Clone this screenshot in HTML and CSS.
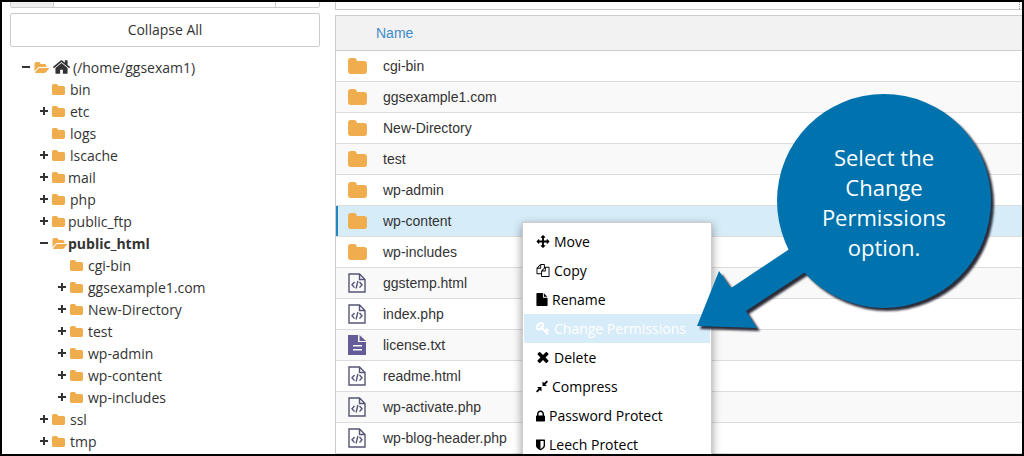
FILE: index.html
```
<!DOCTYPE html>
<html lang="en">
<head>
    <meta charset="UTF-8">
    <title>File Manager</title>
    <meta name="viewport" content="width=device-width, initial-scale=1.0">
    <link rel="stylesheet" href="styles.css">
</head>
<body>
    <svg class="sprite" aria-hidden="true">
        <symbol id="folder" viewBox="64 128 1664 1408"><path d="M1728 608v704q0 92-66 158t-158 66h-1216q-92 0-158-66t-66-158v-960q0-92 66-158t158-66h320q92 0 158 66t66 158v32h672q92 0 158 66t66 158z"/></symbol>
        <symbol id="folder-open" viewBox="0 128 1944 1408"><path d="M1943 952q0 31-31 66l-336 396q-43 51-120.500 86.500t-143.500 35.500h-1088q-34 0-60.500-13t-26.500-43q0-31 31-66l336-396q43-51 120.500-86.500t143.500-35.500h1088q34 0 60.500 13t26.500 43zm-343-344v160h-832q-94 0-197 47.500t-164 119.500l-337 396-5 6q0-4-.5-12.500t-.5-12.500v-960q0-92 66-158t158-66h320q92 0 158 66t66 158v32h544q92 0 158 66t66 158z"/></symbol>
        <symbol id="home" viewBox="89 253 1614 1283"><path d="M1472 992v480q0 26-19 45t-45 19h-384v-384h-256v384h-384q-26 0-45-19t-19-45v-480q0-1 .5-3t.5-3l575-474 575 474q1 2 1 6zm223-69l-62 74q-8 9-21 11h-3q-13 0-21-7l-692-577-692 577q-12 8-24 7-13-2-21-11l-62-74q-8-10-7-23.500t11-21.500l719-599q32-26 76-26t76 26l244 204v-195q0-14 9-23t23-9h192q14 0 23 9t9 23v408l219 182q10 8 11 21.500t-7 23.500z"/></symbol>
        <symbol id="plus" viewBox="0 0 8 8"><path d="M3 0h2v3h3v2H5v3H3V5H0V3h3z"/></symbol>
        <symbol id="minus" viewBox="0 0 8 8"><path d="M0 3h8v2H0z"/></symbol>
        <symbol id="code-file" viewBox="0 0 18 20"><path fill="none" stroke="currentColor" stroke-width="1.400" d="M1 1h10.500L17 6.500V19H1zM11.500 1v5.500H17M6.500 9L4 11.800l2.500 2.800M11.500 9l2.500 2.800-2.500 2.800M9.900 8l-1.800 7.500"/></symbol>
        <symbol id="text-file" viewBox="0 0 18 20"><path d="M0 0h10v7h8v13H0zM11.500 0L18 6h-6.500zM5 10v1.500h9V10zM5 14v1.500h9V14z" fill-rule="evenodd"/></symbol>
        <symbol id="move" viewBox="0 0 1792 1792"><path d="M1792 896q0 26-19 45l-256 256q-19 19-45 19t-45-19-19-45v-128h-384v384h128q26 0 45 19t19 45-19 45l-256 256q-19 19-45 19t-45-19l-256-256q-19-19-19-45t19-45 45-19h128v-384h-384v128q0 26-19 45t-45 19-45-19l-256-256q-19-19-19-45t19-45l256-256q19-19 45-19t45 19 19 45v128h384v-384h-128q-26 0-45-19t-19-45 19-45l256-256q19-19 45-19t45 19l256 256q19 19 19 45t-19 45-45 19h-128v384h384v-128q0-26 19-45t45-19 45 19l256 256q19 19 19 45z"/></symbol>
        <symbol id="copy" viewBox="0 0 1792 1792"><path d="M1696 384q40 0 68 28t28 68v1216q0 40-28 68t-68 28h-960q-40 0-68-28t-28-68v-288h-544q-40 0-68-28t-28-68v-672q0-40 20-88t48-76l408-408q28-28 76-48t88-20h416q40 0 68 28t28 68v328q68-40 128-40h416zm-544 213l-299 299h299v-299zm-640-384l-299 299h299v-299zm196 647l316-316v-416h-384v416q0 40-28 68t-68 28h-416v640h512v-256q0-40 20-88t48-76zm956 804v-1152h-384v416q0 40-28 68t-68 28h-416v640h896z"/></symbol>
        <symbol id="file" viewBox="128 0 1536 1792"><path d="M1152 512v-472q22 14 36 28l408 408q14 14 28 36h-472zm-128 32q0 40 28 68t68 28h544v1056q0 40-28 68t-68 28h-1344q-40 0-68-28t-28-68v-1600q0-40 28-68t68-28h800v544z"/></symbol>
        <symbol id="key" viewBox="64 100 1664 1664"><path stroke="currentColor" stroke-width="60" d="M832 512q0-80-56-136t-136-56-136 56-56 136q0 42 19 83-41-19-83-19-80 0-136 56t-56 136 56 136 136 56 136-56 56-136q0-42-19-83 41 19 83 19 80 0 136-56t56-136zm851 704q0 17-49 66t-66 49q-9 0-28.500-16t-36.500-33-38.500-40-24.500-26l-96 96 220 220q28 28 28 68 0 42-39 81t-81 39q-40 0-68-28l-671-671q-176 131-365 131-163 0-265.500-102.500t-102.500-265.500q0-160 95-313t248-248 313-95q163 0 265.500 102.500t102.500 265.500q0 189-131 365l355 355 96-96q-3-3-26-24.500t-40-38.500-33-36.500-16-28.500q0-17 49-66t66-49q13 0 23 10 6 6 46 44.500t82 79.500 86.500 86 73 78 28.500 41z"/></symbol>
        <symbol id="times" viewBox="302 366 1188 1188"><path d="M1490 1322q0 40-28 68l-136 136q-28 28-68 28t-68-28l-294-294-294 294q-28 28-68 28t-68-28l-136-136q-28-28-28-68t28-68l294-294-294-294q-28-28-28-68t28-68l136-136q28-28 68-28t68 28l294 294 294-294q28-28 68-28t68 28l136 136q28 28 28 68t-28 68l-294 294 294 294q28 28 28 68z"/></symbol>
        <symbol id="compress" viewBox="0 0 12 12"><path d="M6.500 5.500V1l1.600 1.600L10.700 0 12 1.300 9.400 3.900 11 5.500zM5.500 6.500V11L3.900 9.400 1.300 12 0 10.700l2.600-2.600L1 6.500z"/></symbol>
        <symbol id="lock" viewBox="320 128 1152 1408"><path d="M640 768h512v-192q0-106-75-181t-181-75-181 75-75 181v192zm832 96v576q0 40-28 68t-68 28h-960q-40 0-68-28t-28-68v-576q0-40 28-68t68-28h32v-192q0-184 132-316t316-132 316 132 132 316v192h32q40 0 68 28t28 68z"/></symbol>
        <symbol id="shield" viewBox="256 128 1280 1536"><path d="M1344 960v-640h-448v1137q119-63 213-137 235-184 235-360zm192-768v768q0 86-33.500 170.500t-83 150-118 127.500-126.500 103-121 77.500-89.500 49.500-42.500 20q-12 6-26 6t-26-6q-16-7-42.500-20t-89.500-49.500-121-77.500-126.500-103-118-127.500-83-150-33.500-170.500v-768q0-26 19-45t45-19h1152q26 0 45 19t19 45z"/></symbol>
    </svg>

    <div class="window">
        <aside class="sidebar">
            <div class="path-bar">
                <button class="path-home" aria-label="Home"></button>
                <input class="path-input" type="text" aria-label="Path">
                <button class="path-go" aria-label="Go"></button>
            </div>
            <button class="collapse-button">Collapse All</button>

            <ul class="tree">
                <li>
                    <div class="node root"><svg class="toggle"><use href="#minus"/></svg><svg class="node-icon open"><use href="#folder-open"/></svg><svg class="home-icon"><use href="#home"/></svg><a href="#">(/home/ggsexam1)</a></div>
                    <ul>
                        <li><div class="node"><span class="toggle"></span><svg class="node-icon"><use href="#folder"/></svg><a href="#">bin</a></div></li>
                        <li><div class="node"><svg class="toggle"><use href="#plus"/></svg><svg class="node-icon"><use href="#folder"/></svg><a href="#">etc</a></div></li>
                        <li><div class="node"><span class="toggle"></span><svg class="node-icon"><use href="#folder"/></svg><a href="#">logs</a></div></li>
                        <li><div class="node"><svg class="toggle"><use href="#plus"/></svg><svg class="node-icon"><use href="#folder"/></svg><a href="#">lscache</a></div></li>
                        <li><div class="node special"><svg class="toggle"><use href="#plus"/></svg><svg class="node-icon"><use href="#folder"/></svg><a href="#">mail</a></div></li>
                        <li><div class="node"><svg class="toggle"><use href="#plus"/></svg><svg class="node-icon"><use href="#folder"/></svg><a href="#">php</a></div></li>
                        <li><div class="node special"><svg class="toggle"><use href="#plus"/></svg><svg class="node-icon"><use href="#folder"/></svg><a href="#">public_ftp</a></div></li>
                        <li>
                            <div class="node special current"><svg class="toggle"><use href="#minus"/></svg><svg class="node-icon open"><use href="#folder-open"/></svg><a href="#">public_html</a></div>
                            <ul>
                                <li><div class="node"><span class="toggle"></span><svg class="node-icon"><use href="#folder"/></svg><a href="#">cgi-bin</a></div></li>
                                <li><div class="node"><svg class="toggle"><use href="#plus"/></svg><svg class="node-icon"><use href="#folder"/></svg><a href="#">ggsexample1.com</a></div></li>
                                <li><div class="node"><svg class="toggle"><use href="#plus"/></svg><svg class="node-icon"><use href="#folder"/></svg><a href="#">New-Directory</a></div></li>
                                <li><div class="node"><svg class="toggle"><use href="#plus"/></svg><svg class="node-icon"><use href="#folder"/></svg><a href="#">test</a></div></li>
                                <li><div class="node"><svg class="toggle"><use href="#plus"/></svg><svg class="node-icon"><use href="#folder"/></svg><a href="#">wp-admin</a></div></li>
                                <li><div class="node"><svg class="toggle"><use href="#plus"/></svg><svg class="node-icon"><use href="#folder"/></svg><a href="#">wp-content</a></div></li>
                                <li><div class="node"><svg class="toggle"><use href="#plus"/></svg><svg class="node-icon"><use href="#folder"/></svg><a href="#">wp-includes</a></div></li>
                            </ul>
                        </li>
                        <li><div class="node"><svg class="toggle"><use href="#plus"/></svg><svg class="node-icon"><use href="#folder"/></svg><a href="#">ssl</a></div></li>
                        <li><div class="node"><svg class="toggle"><use href="#plus"/></svg><svg class="node-icon"><use href="#folder"/></svg><a href="#">tmp</a></div></li>
                    </ul>
                </li>
            </ul>
        </aside>

        <main class="files">
            <div class="toolbar"><span class="toolbar-edge"></span></div>
            <table class="file-table">
                <thead>
                    <tr><th class="icon-cell"></th><th>Name</th></tr>
                </thead>
                <tbody>
                    <tr><td class="icon-cell"><svg class="folder-icon"><use href="#folder"/></svg></td><td>cgi-bin</td></tr>
                    <tr><td class="icon-cell"><svg class="folder-icon"><use href="#folder"/></svg></td><td>ggsexample1.com</td></tr>
                    <tr><td class="icon-cell"><svg class="folder-icon"><use href="#folder"/></svg></td><td>New-Directory</td></tr>
                    <tr><td class="icon-cell"><svg class="folder-icon"><use href="#folder"/></svg></td><td>test</td></tr>
                    <tr><td class="icon-cell"><svg class="folder-icon"><use href="#folder"/></svg></td><td>wp-admin</td></tr>
                    <tr class="selected"><td class="icon-cell"><svg class="folder-icon"><use href="#folder"/></svg></td><td>wp-content</td></tr>
                    <tr><td class="icon-cell"><svg class="folder-icon"><use href="#folder"/></svg></td><td>wp-includes</td></tr>
                    <tr><td class="icon-cell"><svg class="file-icon"><use href="#code-file"/></svg></td><td>ggstemp.html</td></tr>
                    <tr><td class="icon-cell"><svg class="file-icon"><use href="#code-file"/></svg></td><td>index.php</td></tr>
                    <tr><td class="icon-cell"><svg class="file-icon text"><use href="#text-file"/></svg></td><td>license.txt</td></tr>
                    <tr><td class="icon-cell"><svg class="file-icon"><use href="#code-file"/></svg></td><td>readme.html</td></tr>
                    <tr><td class="icon-cell"><svg class="file-icon"><use href="#code-file"/></svg></td><td>wp-activate.php</td></tr>
                    <tr><td class="icon-cell"><svg class="file-icon"><use href="#code-file"/></svg></td><td>wp-blog-header.php</td></tr>
                </tbody>
            </table>
        </main>

        <div class="context-menu">
            <button><svg class="menu-icon"><use href="#move"/></svg>Move</button>
            <button><svg class="menu-icon"><use href="#copy"/></svg>Copy</button>
            <button><svg class="menu-icon medium"><use href="#file"/></svg>Rename</button>
            <button class="active"><svg class="menu-icon"><use href="#key"/></svg>Change Permissions</button>
            <button><svg class="menu-icon cross"><use href="#times"/></svg>Delete</button>
            <button><svg class="menu-icon medium"><use href="#compress"/></svg>Compress</button>
            <button><svg class="menu-icon small"><use href="#lock"/></svg>Password Protect</button>
            <button><svg class="menu-icon small"><use href="#shield"/></svg>Leech Protect</button>
        </div>

        <div class="callout">
            <svg class="callout-shape" viewBox="0 0 296 237" aria-hidden="true">
                <circle cx="187" cy="108" r="107"/>
                <path d="M94 155L34 195 22 178 0 233 60 235 49 218 110 178z"/>
            </svg>
            <p class="callout-text">Select the Change Permissions option.</p>
        </div>
    </div>
</body>
</html>
```
FILE: styles.css
```
* {
    box-sizing: border-box;
}

body {
    margin: 0;
    background-color: #fff;
    color: #333;
    font-family: "Open Sans", "Noto Sans", sans-serif;
    font-size: 14px;
}

button {
    font-family: inherit;
    font-size: 14px;
    cursor: pointer;
}

svg {
    fill: currentColor;
    flex: none;
}

.sprite {
    display: none;
}

.window {
    position: relative;
    display: flex;
    gap: 15px;
    height: 100vh;
    padding-left: 8px;
    border: 2px solid #000;
    overflow: hidden;
}

/* Folder tree */
.sidebar {
    flex: none;
    width: 310px;
}

/* only the lower edge of the bar is scrolled into view */
.path-bar {
    display: flex;
    height: 34px;
    margin-top: -28px;
    border: 1px solid #ccc;
    border-radius: 2px;
}

.path-home,
.path-input,
.path-go {
    border: 0;
    padding: 0;
    background-color: #fff;
}

.path-home {
    width: 43px;
    background-color: #eee;
    border-right: 1px solid #ccc;
}

.path-input {
    flex: 1;
    min-width: 0;
}

.path-go {
    width: 44px;
    border-left: 1px solid #ccc;
}

.collapse-button {
    display: block;
    width: 100%;
    height: 34px;
    margin: 5px 0 9px;
    padding-bottom: 3px;
    border: 1px solid #ccc;
    border-radius: 2px;
    background-color: #fff;
    color: #333;
}

.tree,
.tree ul {
    margin: 0;
    padding: 0;
    list-style: none;
}

.tree {
    padding-left: 12px;
}

.tree ul {
    padding-left: 18px;
}

.node {
    display: flex;
    align-items: center;
    gap: 4px;
    height: 22px;
}

.node a {
    margin-left: 1px;
    color: #333;
    text-decoration: none;
}

.home-icon {
    width: 17px;
    height: 14px;
}

.toggle {
    width: 8px;
    height: 8px;
}

.node-icon {
    width: 13px;
    height: 11px;
    color: #f0ad4e;
}

.node-icon.open {
    width: 15px;
}

.node.root a,
.node.special a {
    margin-left: -1px;
}

.node.current {
    font-weight: bold;
}

.node.current a {
    margin-left: -3px;
}

/* File list */
.files {
    flex: 1;
    min-width: 0;
}

.toolbar {
    display: flex;
    justify-content: flex-end;
    height: 8px;
    margin-bottom: 5px;
    padding-right: 2px;
    border-left: 1px solid #ccc;
    border-bottom: 1px solid #ccc;
}

.toolbar-edge {
    border-left: 1px dotted #999;
}

.file-table {
    width: 100%;
    border-collapse: separate;
    border-spacing: 0;
    border-top: 1px solid #ccc;
    border-left: 1px solid #ccc;
    font-family: "Liberation Sans", Arial, sans-serif;
}

.file-table th,
.file-table td {
    padding: 0 0 0 7px;
    border-bottom: 1px solid #ddd;
    text-align: left;
}

.file-table td {
    height: 31px;
}

.file-table th {
    height: 35px;
    padding-left: 0;
    border-bottom-color: #ccc;
    background-color: #f2f2f2;
    color: #428bca;
    font-weight: normal;
}

.file-table .icon-cell {
    width: 40px;
    padding-left: 12px;
}

.file-table tbody tr:nth-child(even) {
    background-color: #f9f9f9;
}

.file-table tbody tr.selected {
    background-color: #d7ecf9;
}

.selected .icon-cell {
    box-shadow: inset 2px 0 #1f86c0;
}

.icon-cell svg {
    display: block;
}

.folder-icon {
    width: 19px;
    height: 16px;
    color: #f0ad4e;
}

.file-icon {
    width: 18px;
    height: 20px;
    color: #555577;
}

.file-icon.text {
    color: #635c99;
}

/* Right click menu */
.context-menu {
    position: absolute;
    top: 220px;
    left: 520px;
    width: 190px;
    padding: 4px 1px;
    border: 1px solid #ccc;
    background-color: #fff;
    box-shadow: 0 3px 9px rgba(0, 0, 0, 0.4);
}

.context-menu button {
    display: flex;
    align-items: center;
    gap: 4px;
    width: 100%;
    height: 29px;
    padding: 0 12px;
    border: 0;
    background-color: transparent;
    color: #000;
}

.context-menu button.active {
    background-color: #d7ecf9;
    color: #fff;
}

.menu-icon {
    width: 14px;
    height: 13px;
}

.menu-icon.cross {
    height: 11px;
}

.menu-icon.medium {
    width: 12px;
}

.menu-icon.small {
    width: 9px;
    height: 12px;
}

/* Tutorial callout */
.callout {
    position: absolute;
    top: 91px;
    left: 695px;
    width: 296px;
}

.callout-shape {
    display: block;
    width: 100%;
    fill: #0072ad;
    overflow: visible;
    filter: drop-shadow(3px 3px 1px #2b2b38);
}

.callout-text {
    position: absolute;
    top: 49px;
    left: 117px;
    width: 140px;
    margin: 0;
    color: #fff;
    font-size: 22px;
    line-height: 30px;
    text-align: center;
}
```
